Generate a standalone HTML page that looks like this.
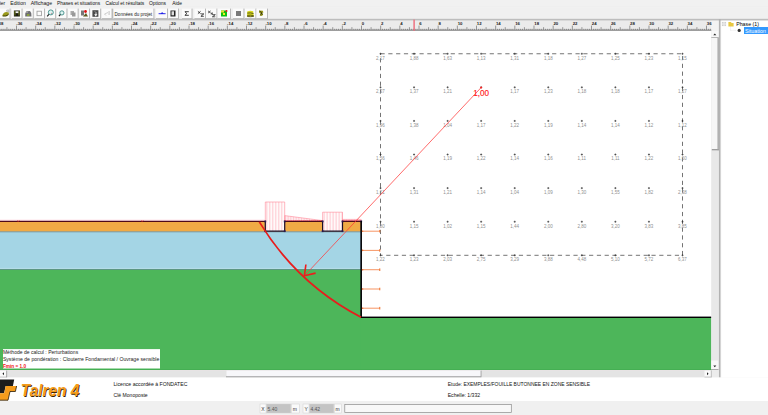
<!DOCTYPE html>
<html><head><meta charset="utf-8"><title>Talren 4</title>
<style>html,body{margin:0;padding:0;width:768px;height:415px;overflow:hidden;background:#f0f0f0;font-family:"Liberation Sans",sans-serif}svg{display:block}</style>
</head><body><svg width="768" height="415" viewBox="0 0 768 415" font-family="Liberation Sans, sans-serif"><rect x="0" y="0" width="768" height="7.5" fill="#f1f1f1"/>
<text x="-0.3" y="5.2" font-size="5.3" fill="#111" textLength="5.40" lengthAdjust="spacingAndGlyphs" >ier</text>
<text x="10.3" y="5.2" font-size="5.3" fill="#111" textLength="15.50" lengthAdjust="spacingAndGlyphs" >Edition</text>
<text x="30.7" y="5.2" font-size="5.3" fill="#111" textLength="21.40" lengthAdjust="spacingAndGlyphs" >Affichage</text>
<text x="57.1" y="5.2" font-size="5.3" fill="#111" textLength="43.10" lengthAdjust="spacingAndGlyphs" >Phases et situations</text>
<text x="105.4" y="5.2" font-size="5.3" fill="#111" textLength="38.90" lengthAdjust="spacingAndGlyphs" >Calcul et résultats</text>
<text x="149" y="5.2" font-size="5.3" fill="#111" textLength="17.10" lengthAdjust="spacingAndGlyphs" >Options</text>
<text x="172.2" y="5.2" font-size="5.3" fill="#111" textLength="9.90" lengthAdjust="spacingAndGlyphs" >Aide</text>
<rect x="0" y="7.5" width="768" height="12" fill="#f0f0f0"/>
<rect x="0" y="6.9" width="768" height="0.6" fill="#dcdcdc"/><rect x="0" y="7.5" width="768" height="0.6" fill="#fcfcfc"/>
<rect x="268" y="8.1" width="500" height="10.9" fill="#f0f0f0"/>
<rect x="-1" y="8.6" width="10.6" height="9.6" fill="#fbfbfb"/>
<rect x="9.6" y="8.6" width="0.9" height="10.2" fill="#b4b4b4"/>
<rect x="-1" y="18.2" width="11.5" height="0.8" fill="#b4b4b4"/>
<rect x="12" y="8.6" width="9.6" height="9.6" fill="#fbfbfb"/>
<rect x="21.6" y="8.6" width="0.9" height="10.2" fill="#b4b4b4"/>
<rect x="12" y="18.2" width="10.5" height="0.8" fill="#b4b4b4"/>
<rect x="23.2" y="8.6" width="9.6" height="9.6" fill="#fbfbfb"/>
<rect x="32.8" y="8.6" width="0.9" height="10.2" fill="#b4b4b4"/>
<rect x="23.2" y="18.2" width="10.5" height="0.8" fill="#b4b4b4"/>
<rect x="34.4" y="8.6" width="9.6" height="9.6" fill="#fbfbfb"/>
<rect x="44.0" y="8.6" width="0.9" height="10.2" fill="#b4b4b4"/>
<rect x="34.4" y="18.2" width="10.5" height="0.8" fill="#b4b4b4"/>
<rect x="45.6" y="8.6" width="9.6" height="9.6" fill="#fbfbfb"/>
<rect x="55.2" y="8.6" width="0.9" height="10.2" fill="#b4b4b4"/>
<rect x="45.6" y="18.2" width="10.5" height="0.8" fill="#b4b4b4"/>
<rect x="56.9" y="8.6" width="9.6" height="9.6" fill="#fbfbfb"/>
<rect x="66.5" y="8.6" width="0.9" height="10.2" fill="#b4b4b4"/>
<rect x="56.9" y="18.2" width="10.5" height="0.8" fill="#b4b4b4"/>
<rect x="68.1" y="8.6" width="9.6" height="9.6" fill="#fbfbfb"/>
<rect x="77.69999999999999" y="8.6" width="0.9" height="10.2" fill="#b4b4b4"/>
<rect x="68.1" y="18.2" width="10.5" height="0.8" fill="#b4b4b4"/>
<rect x="79.4" y="8.6" width="9.6" height="9.6" fill="#fbfbfb"/>
<rect x="89.0" y="8.6" width="0.9" height="10.2" fill="#b4b4b4"/>
<rect x="79.4" y="18.2" width="10.5" height="0.8" fill="#b4b4b4"/>
<rect x="90.6" y="8.6" width="9.6" height="9.6" fill="#fbfbfb"/>
<rect x="100.19999999999999" y="8.6" width="0.9" height="10.2" fill="#b4b4b4"/>
<rect x="90.6" y="18.2" width="10.5" height="0.8" fill="#b4b4b4"/>
<rect x="102" y="8.6" width="9.6" height="9.6" fill="#fbfbfb"/>
<rect x="111.6" y="8.6" width="0.9" height="10.2" fill="#b4b4b4"/>
<rect x="102" y="18.2" width="10.5" height="0.8" fill="#b4b4b4"/>
<rect x="113.5" y="8.6" width="40" height="9.6" fill="#fbfbfb"/>
<rect x="153.5" y="8.6" width="0.9" height="10.2" fill="#b4b4b4"/>
<rect x="113.5" y="18.2" width="40.9" height="0.8" fill="#b4b4b4"/>
<rect x="112.4" y="8.8" width="0.8" height="9.6" fill="#a8a8a8"/>
<text x="114.5" y="15.7" font-size="5.2" fill="#222" textLength="37.60" lengthAdjust="spacingAndGlyphs" >Données du projet</text>
<rect x="156" y="8.6" width="11" height="9.6" fill="#fbfbfb"/>
<rect x="167" y="8.6" width="0.9" height="10.2" fill="#b4b4b4"/>
<rect x="156" y="18.2" width="11.9" height="0.8" fill="#b4b4b4"/>
<rect x="168.5" y="8.6" width="9.6" height="9.6" fill="#fbfbfb"/>
<rect x="178.1" y="8.6" width="0.9" height="10.2" fill="#b4b4b4"/>
<rect x="168.5" y="18.2" width="10.5" height="0.8" fill="#b4b4b4"/>
<rect x="182" y="8.6" width="9.6" height="9.6" fill="#fbfbfb"/>
<rect x="191.6" y="8.6" width="0.9" height="10.2" fill="#b4b4b4"/>
<rect x="182" y="18.2" width="10.5" height="0.8" fill="#b4b4b4"/>
<rect x="194.5" y="8.6" width="10.5" height="9.6" fill="#fbfbfb"/>
<rect x="205.0" y="8.6" width="0.9" height="10.2" fill="#b4b4b4"/>
<rect x="194.5" y="18.2" width="11.4" height="0.8" fill="#b4b4b4"/>
<rect x="206" y="8.6" width="10.5" height="9.6" fill="#fbfbfb"/>
<rect x="216.5" y="8.6" width="0.9" height="10.2" fill="#b4b4b4"/>
<rect x="206" y="18.2" width="11.4" height="0.8" fill="#b4b4b4"/>
<rect x="217.6" y="8.6" width="12.5" height="9.6" fill="#fbfbfb"/>
<rect x="230.1" y="8.6" width="0.9" height="10.2" fill="#b4b4b4"/>
<rect x="217.6" y="18.2" width="13.4" height="0.8" fill="#b4b4b4"/>
<rect x="233" y="8.6" width="10.5" height="9.6" fill="#fbfbfb"/>
<rect x="243.5" y="8.6" width="0.9" height="10.2" fill="#b4b4b4"/>
<rect x="233" y="18.2" width="11.4" height="0.8" fill="#b4b4b4"/>
<rect x="245" y="8.6" width="10.5" height="9.6" fill="#fbfbfb"/>
<rect x="255.5" y="8.6" width="0.9" height="10.2" fill="#b4b4b4"/>
<rect x="245" y="18.2" width="11.4" height="0.8" fill="#b4b4b4"/>
<rect x="256.5" y="8.6" width="10.5" height="9.6" fill="#fbfbfb"/>
<rect x="267.0" y="8.6" width="0.9" height="10.2" fill="#b4b4b4"/>
<rect x="256.5" y="18.2" width="11.4" height="0.8" fill="#b4b4b4"/>
<path d="M6.6 10.2 L8.6 9.9 L9 11.8 L7 12.2Z" fill="#e8e8e8" stroke="#777" stroke-width="0.4"/><path d="M2.3 15.6 Q3.2 12.3 6.5 12 L9.2 12.8 Q8.6 15.6 6.8 16.2 L3 16.3Z" fill="#9a9a1a"/><path d="M2.6 16 Q6 16.6 8.6 14.6" stroke="#2a2a0a" stroke-width="0.8" fill="none"/>
<rect x="13.9" y="10.5" width="6" height="6" fill="#1c1c10"/><rect x="14.5" y="11" width="0.9" height="4.5" fill="#7a8a20"/><rect x="18.5" y="11" width="0.9" height="4.5" fill="#7a8a20"/><rect x="15.6" y="11.3" width="2.8" height="1.8" fill="#f4f4f4"/>
<path d="M25.2 16.4 Q24.8 12.6 26.4 11.3 L30 11.1 Q31.8 12.6 31.5 16.4Z" fill="#6e6e72"/><rect x="27" y="14" width="2.4" height="2" fill="#8aa040"/><rect x="26.5" y="11.8" width="1" height="1" fill="#dcdcdc"/>
<rect x="37" y="11.2" width="4.5" height="4.5" fill="none" stroke="#9a9a9a" stroke-width="0.8"/>
<circle cx="50.8" cy="12.4" r="2.5" fill="#dff4f2" stroke="#3c8a86" stroke-width="0.9"/><circle cx="51.4" cy="13.2" r="0.5" fill="#c05a6a"/><path d="M48.9 14.3 L47.2 16.4" stroke="#1a1a1a" stroke-width="1.1"/>
<circle cx="61.9" cy="12.9" r="2.1" fill="#dff4f2" stroke="#3c8a86" stroke-width="0.9"/><path d="M60.4 14.5 L58.9 16.1" stroke="#1a1a1a" stroke-width="1.1"/>
<rect x="70.5" y="11" width="3.5" height="4" fill="#aaa"/><rect x="72" y="12.5" width="3.5" height="4" fill="#999"/>
<rect x="81" y="10.5" width="3" height="5" fill="#777"/><circle cx="85.5" cy="11.5" r="1.4" fill="#e01010"/><path d="M83 16.5 L86 13 L88 16.5Z" fill="#5a5a20"/>
<path d="M92.4 10.2H98.4V16.8H92.4Z" fill="#4a4a4a"/><path d="M93.4 10.8L96 11.2L95.3 12.5Z" fill="#777"/><path d="M95.6 12.3V14.2H94.2L95.8 16.6L97.4 14.2H96.4V12.3Z" fill="#fff"/>
<path d="M104.5 14 L108 12.5 M104.5 14 L106 15.5" stroke="#bbb" stroke-width="0.7" fill="none"/><rect x="108.5" y="11" width="1.2" height="4" fill="#ccc"/>
<path d="M158.6 13.7 H165.6" stroke="#1414e6" stroke-width="0.9"/><path d="M160.6 13.7 Q162.1 10.6 163.6 13.7Z" fill="#1414e6"/>
<rect x="170.5" y="10.5" width="5" height="6" fill="#222"/><rect x="171.5" y="11.3" width="2.5" height="4" fill="#ddd"/>
<path d="M188.8 11.7 H184.9 L186.9 13.5 L184.9 15.3 H188.8" stroke="#111" stroke-width="0.8" fill="none"/>
<path d="M197.9 11.3 L200.6 13.7 M200.6 11.3 L197.9 13.7 M200.9 13.9 H203.8 L200.9 16.3 H203.8" stroke="#111" stroke-width="0.75" fill="none"/>
<path d="M208.1 10.9 L210.6 13.1 M210.6 10.9 L208.1 13.1 M210.8 12.6 L213 14.6 M213 12.6 L210.8 14.6 M212.4 14.7 H215.3 L212.4 16.8 H215.3" stroke="#111" stroke-width="0.7" fill="none"/>
<rect x="221" y="10.5" width="6" height="6" fill="#10c010"/><rect x="221" y="10.5" width="3" height="2" fill="#e8e030"/><circle cx="226.5" cy="11" r="1" fill="#e02020"/><rect x="223" y="13" width="2" height="2" fill="#f0f020"/>
<rect x="236" y="11" width="5" height="5" fill="#7a7a7a"/>
<path d="M247.2 11.6 Q250 10 253.2 11.2 L253.8 16.4 Q250.5 17.2 247 16.5Z" fill="#d8d820"/><path d="M247.3 13.1 Q250.5 12.5 253.5 13.5 M247.2 15.4 Q250.5 14.8 253.7 15.6 M247.2 16.5 Q250.5 17 253.8 16.4" stroke="#2a2a08" stroke-width="0.7" fill="none"/>
<path d="M259.2 10.5 L262.8 10.8 L263.4 12.4 L261.8 13 L263.2 14.2 L262 15.9 L259.8 15.6 L260.6 13.8 L259 12.6Z" fill="#9a9a14"/><path d="M259.4 11 L261.8 12.6 L260.4 15.4 M261.5 13.5 L263 14.3" stroke="#1e1e08" stroke-width="0.7" fill="none"/>
<rect x="0" y="18.8" width="768" height="1.9" fill="#bdbdbd"/>
<rect x="0" y="20.6" width="711.3" height="10.4" fill="#ebebeb"/>
<rect x="711.3" y="20.6" width="8" height="10.4" fill="#f3f3f3"/>
<path d="M1.18 28.8V30M3.10 28.8V30M5.01 28.8V30M6.93 27.2V30M8.85 28.8V30M10.76 28.8V30M12.68 28.8V30M14.60 28.8V30M16.51 25.6V30M18.43 28.8V30M20.35 28.8V30M22.26 28.8V30M24.18 28.8V30M26.09 27.2V30M28.01 28.8V30M29.93 28.8V30M31.84 28.8V30M33.76 28.8V30M35.68 25.6V30M37.59 28.8V30M39.51 28.8V30M41.43 28.8V30M43.34 28.8V30M45.26 27.2V30M47.18 28.8V30M49.09 28.8V30M51.01 28.8V30M52.93 28.8V30M54.84 25.6V30M56.76 28.8V30M58.68 28.8V30M60.59 28.8V30M62.51 28.8V30M64.43 27.2V30M66.34 28.8V30M68.26 28.8V30M70.18 28.8V30M72.09 28.8V30M74.01 25.6V30M75.93 28.8V30M77.84 28.8V30M79.76 28.8V30M81.68 28.8V30M83.59 27.2V30M85.51 28.8V30M87.43 28.8V30M89.34 28.8V30M91.26 28.8V30M93.18 25.6V30M95.09 28.8V30M97.01 28.8V30M98.93 28.8V30M100.84 28.8V30M102.76 27.2V30M104.68 28.8V30M106.59 28.8V30M108.51 28.8V30M110.43 28.8V30M112.34 25.6V30M114.26 28.8V30M116.18 28.8V30M118.09 28.8V30M120.01 28.8V30M121.92 27.2V30M123.84 28.8V30M125.76 28.8V30M127.67 28.8V30M129.59 28.8V30M131.51 25.6V30M133.42 28.8V30M135.34 28.8V30M137.26 28.8V30M139.17 28.8V30M141.09 27.2V30M143.01 28.8V30M144.92 28.8V30M146.84 28.8V30M148.76 28.8V30M150.67 25.6V30M152.59 28.8V30M154.51 28.8V30M156.42 28.8V30M158.34 28.8V30M160.26 27.2V30M162.17 28.8V30M164.09 28.8V30M166.01 28.8V30M167.92 28.8V30M169.84 25.6V30M171.76 28.8V30M173.67 28.8V30M175.59 28.8V30M177.51 28.8V30M179.42 27.2V30M181.34 28.8V30M183.26 28.8V30M185.17 28.8V30M187.09 28.8V30M189.01 25.6V30M190.92 28.8V30M192.84 28.8V30M194.76 28.8V30M196.67 28.8V30M198.59 27.2V30M200.51 28.8V30M202.42 28.8V30M204.34 28.8V30M206.26 28.8V30M208.17 25.6V30M210.09 28.8V30M212.01 28.8V30M213.92 28.8V30M215.84 28.8V30M217.75 27.2V30M219.67 28.8V30M221.59 28.8V30M223.50 28.8V30M225.42 28.8V30M227.34 25.6V30M229.25 28.8V30M231.17 28.8V30M233.09 28.8V30M235.00 28.8V30M236.92 27.2V30M238.84 28.8V30M240.75 28.8V30M242.67 28.8V30M244.59 28.8V30M246.50 25.6V30M248.42 28.8V30M250.34 28.8V30M252.25 28.8V30M254.17 28.8V30M256.09 27.2V30M258.00 28.8V30M259.92 28.8V30M261.84 28.8V30M263.75 28.8V30M265.67 25.6V30M267.59 28.8V30M269.50 28.8V30M271.42 28.8V30M273.34 28.8V30M275.25 27.2V30M277.17 28.8V30M279.09 28.8V30M281.00 28.8V30M282.92 28.8V30M284.84 25.6V30M286.75 28.8V30M288.67 28.8V30M290.59 28.8V30M292.50 28.8V30M294.42 27.2V30M296.34 28.8V30M298.25 28.8V30M300.17 28.8V30M302.09 28.8V30M304.00 25.6V30M305.92 28.8V30M307.84 28.8V30M309.75 28.8V30M311.67 28.8V30M313.58 27.2V30M315.50 28.8V30M317.42 28.8V30M319.33 28.8V30M321.25 28.8V30M323.17 25.6V30M325.08 28.8V30M327.00 28.8V30M328.92 28.8V30M330.83 28.8V30M332.75 27.2V30M334.67 28.8V30M336.58 28.8V30M338.50 28.8V30M340.42 28.8V30M342.33 25.6V30M344.25 28.8V30M346.17 28.8V30M348.08 28.8V30M350.00 28.8V30M351.92 27.2V30M353.83 28.8V30M355.75 28.8V30M357.67 28.8V30M359.58 28.8V30M361.50 25.6V30M363.42 28.8V30M365.33 28.8V30M367.25 28.8V30M369.17 28.8V30M371.08 27.2V30M373.00 28.8V30M374.92 28.8V30M376.83 28.8V30M378.75 28.8V30M380.67 25.6V30M382.58 28.8V30M384.50 28.8V30M386.42 28.8V30M388.33 28.8V30M390.25 27.2V30M392.17 28.8V30M394.08 28.8V30M396.00 28.8V30M397.92 28.8V30M399.83 25.6V30M401.75 28.8V30M403.67 28.8V30M405.58 28.8V30M407.50 28.8V30M409.42 27.2V30M411.33 28.8V30M413.25 28.8V30M415.16 28.8V30M417.08 28.8V30M419.00 25.6V30M420.91 28.8V30M422.83 28.8V30M424.75 28.8V30M426.66 28.8V30M428.58 27.2V30M430.50 28.8V30M432.41 28.8V30M434.33 28.8V30M436.25 28.8V30M438.16 25.6V30M440.08 28.8V30M442.00 28.8V30M443.91 28.8V30M445.83 28.8V30M447.75 27.2V30M449.66 28.8V30M451.58 28.8V30M453.50 28.8V30M455.41 28.8V30M457.33 25.6V30M459.25 28.8V30M461.16 28.8V30M463.08 28.8V30M465.00 28.8V30M466.91 27.2V30M468.83 28.8V30M470.75 28.8V30M472.66 28.8V30M474.58 28.8V30M476.50 25.6V30M478.41 28.8V30M480.33 28.8V30M482.25 28.8V30M484.16 28.8V30M486.08 27.2V30M488.00 28.8V30M489.91 28.8V30M491.83 28.8V30M493.75 28.8V30M495.66 25.6V30M497.58 28.8V30M499.50 28.8V30M501.41 28.8V30M503.33 28.8V30M505.25 27.2V30M507.16 28.8V30M509.08 28.8V30M510.99 28.8V30M512.91 28.8V30M514.83 25.6V30M516.74 28.8V30M518.66 28.8V30M520.58 28.8V30M522.49 28.8V30M524.41 27.2V30M526.33 28.8V30M528.24 28.8V30M530.16 28.8V30M532.08 28.8V30M533.99 25.6V30M535.91 28.8V30M537.83 28.8V30M539.74 28.8V30M541.66 28.8V30M543.58 27.2V30M545.49 28.8V30M547.41 28.8V30M549.33 28.8V30M551.24 28.8V30M553.16 25.6V30M555.08 28.8V30M556.99 28.8V30M558.91 28.8V30M560.83 28.8V30M562.74 27.2V30M564.66 28.8V30M566.58 28.8V30M568.49 28.8V30M570.41 28.8V30M572.33 25.6V30M574.24 28.8V30M576.16 28.8V30M578.08 28.8V30M579.99 28.8V30M581.91 27.2V30M583.83 28.8V30M585.74 28.8V30M587.66 28.8V30M589.58 28.8V30M591.49 25.6V30M593.41 28.8V30M595.33 28.8V30M597.24 28.8V30M599.16 28.8V30M601.08 27.2V30M602.99 28.8V30M604.91 28.8V30M606.82 28.8V30M608.74 28.8V30M610.66 25.6V30M612.57 28.8V30M614.49 28.8V30M616.41 28.8V30M618.32 28.8V30M620.24 27.2V30M622.16 28.8V30M624.07 28.8V30M625.99 28.8V30M627.91 28.8V30M629.82 25.6V30M631.74 28.8V30M633.66 28.8V30M635.57 28.8V30M637.49 28.8V30M639.41 27.2V30M641.32 28.8V30M643.24 28.8V30M645.16 28.8V30M647.07 28.8V30M648.99 25.6V30M650.91 28.8V30M652.82 28.8V30M654.74 28.8V30M656.66 28.8V30M658.57 27.2V30M660.49 28.8V30M662.41 28.8V30M664.32 28.8V30M666.24 28.8V30M668.16 25.6V30M670.07 28.8V30M671.99 28.8V30M673.91 28.8V30M675.82 28.8V30M677.74 27.2V30M679.66 28.8V30M681.57 28.8V30M683.49 28.8V30M685.41 28.8V30M687.32 25.6V30M689.24 28.8V30M691.16 28.8V30M693.07 28.8V30M694.99 28.8V30M696.90 27.2V30M698.82 28.8V30M700.74 28.8V30M702.65 28.8V30M704.57 28.8V30M706.49 25.6V30M708.40 28.8V30M710.32 28.8V30" stroke="#5a5a5a" stroke-width="0.6"/>
<rect x="0" y="29.7" width="711.3" height="0.9" fill="#6a6a6a"/>
<text x="-2.90" y="24.9" font-size="4.3" fill="#222" font-weight="bold">-38</text>
<text x="16.26" y="24.9" font-size="4.3" fill="#222" font-weight="bold">-36</text>
<text x="35.43" y="24.9" font-size="4.3" fill="#222" font-weight="bold">-34</text>
<text x="54.59" y="24.9" font-size="4.3" fill="#222" font-weight="bold">-32</text>
<text x="73.76" y="24.9" font-size="4.3" fill="#222" font-weight="bold">-30</text>
<text x="92.93" y="24.9" font-size="4.3" fill="#222" font-weight="bold">-28</text>
<text x="112.09" y="24.9" font-size="4.3" fill="#222" font-weight="bold">-26</text>
<text x="131.26" y="24.9" font-size="4.3" fill="#222" font-weight="bold">-24</text>
<text x="150.42" y="24.9" font-size="4.3" fill="#222" font-weight="bold">-22</text>
<text x="169.59" y="24.9" font-size="4.3" fill="#222" font-weight="bold">-20</text>
<text x="188.76" y="24.9" font-size="4.3" fill="#222" font-weight="bold">-18</text>
<text x="207.92" y="24.9" font-size="4.3" fill="#222" font-weight="bold">-16</text>
<text x="227.09" y="24.9" font-size="4.3" fill="#222" font-weight="bold">-14</text>
<text x="246.25" y="24.9" font-size="4.3" fill="#222" font-weight="bold">-12</text>
<text x="265.42" y="24.9" font-size="4.3" fill="#222" font-weight="bold">-10</text>
<text x="284.59" y="24.9" font-size="4.3" fill="#222" font-weight="bold">-8</text>
<text x="303.75" y="24.9" font-size="4.3" fill="#222" font-weight="bold">-6</text>
<text x="322.92" y="24.9" font-size="4.3" fill="#222" font-weight="bold">-4</text>
<text x="342.08" y="24.9" font-size="4.3" fill="#222" font-weight="bold">-2</text>
<text x="361.80" y="24.9" font-size="4.3" fill="#222" font-weight="bold">0</text>
<text x="380.97" y="24.9" font-size="4.3" fill="#222" font-weight="bold">2</text>
<text x="400.13" y="24.9" font-size="4.3" fill="#222" font-weight="bold">4</text>
<text x="419.30" y="24.9" font-size="4.3" fill="#222" font-weight="bold">6</text>
<text x="438.46" y="24.9" font-size="4.3" fill="#222" font-weight="bold">8</text>
<text x="457.63" y="24.9" font-size="4.3" fill="#222" font-weight="bold">10</text>
<text x="476.80" y="24.9" font-size="4.3" fill="#222" font-weight="bold">12</text>
<text x="495.96" y="24.9" font-size="4.3" fill="#222" font-weight="bold">14</text>
<text x="515.13" y="24.9" font-size="4.3" fill="#222" font-weight="bold">16</text>
<text x="534.29" y="24.9" font-size="4.3" fill="#222" font-weight="bold">18</text>
<text x="553.46" y="24.9" font-size="4.3" fill="#222" font-weight="bold">20</text>
<text x="572.63" y="24.9" font-size="4.3" fill="#222" font-weight="bold">22</text>
<text x="591.79" y="24.9" font-size="4.3" fill="#222" font-weight="bold">24</text>
<text x="610.96" y="24.9" font-size="4.3" fill="#222" font-weight="bold">26</text>
<text x="630.12" y="24.9" font-size="4.3" fill="#222" font-weight="bold">28</text>
<text x="649.29" y="24.9" font-size="4.3" fill="#222" font-weight="bold">30</text>
<text x="668.46" y="24.9" font-size="4.3" fill="#222" font-weight="bold">32</text>
<text x="687.62" y="24.9" font-size="4.3" fill="#222" font-weight="bold">34</text>
<text x="706.79" y="24.9" font-size="4.3" fill="#222" font-weight="bold">36</text>
<rect x="413.4" y="19.6" width="1.4" height="11.2" fill="#ee6a7a"/>
<rect x="0" y="31" width="711.3" height="339.3" fill="#ffffff"/>
<rect x="0" y="221.3" width="361.2" height="10.5" fill="#f0aa45"/>
<rect x="0" y="231.8" width="361.2" height="37.5" fill="#a4d5e5"/>
<rect x="0" y="269.3" width="361.2" height="101" fill="#4db65a"/>
<rect x="360.5" y="317.4" width="350.8" height="52.9" fill="#4db65a"/>
<rect x="265.3" y="221" width="19.4" height="10.3" fill="#ffffff"/>
<rect x="322.6" y="221" width="19.9" height="10.3" fill="#ffffff"/>
<path d="M0 231.8H361.2" stroke="#6a8890" stroke-width="0.8"/>
<path d="M0 268.4H361.2" stroke="#c4eaf6" stroke-width="0.9"/>
<path d="M0 269.4H361.2" stroke="#4a7a80" stroke-width="0.7"/>
<path d="M265.3 231V202L284.7 202V231Z" fill="#fffafa"/>
<path d="M266.80 202.00V231.00M269.80 202.00V231.00M272.80 202.00V231.00M275.80 202.00V231.00M278.80 202.00V231.00M281.80 202.00V231.00" stroke="#ffa0ac" stroke-width="0.55"/>
<path d="M265.3 231V202L284.7 202V231" stroke="#ff8898" stroke-width="0.6" fill="none"/>
<path d="M285.50 215.71V221.00M287.10 215.92V221.00M288.70 216.13V221.00M290.30 216.34V221.00M291.90 216.55V221.00M293.50 216.76V221.00M295.10 216.97V221.00M296.70 217.18V221.00M298.30 217.39V221.00M299.90 217.61V221.00M301.50 217.82V221.00M303.10 218.03V221.00M304.70 218.24V221.00M306.30 218.45V221.00M307.90 218.66V221.00M309.50 218.87V221.00M311.10 219.08V221.00M312.70 219.29V221.00M314.30 219.51V221.00M315.90 219.72V221.00M317.50 219.93V221.00M319.10 220.14V221.00M320.70 220.35V221.00" stroke="#ffa0ac" stroke-width="0.55"/>
<path d="M284.7 221V215.6L322.6 220.6V221" stroke="#ff8898" stroke-width="0.6" fill="none"/>
<path d="M322.6 231V212.2L342.5 212.2V231Z" fill="#fffafa"/>
<path d="M324.10 212.20V231.00M327.10 212.20V231.00M330.10 212.20V231.00M333.10 212.20V231.00M336.10 212.20V231.00M339.10 212.20V231.00M342.10 212.20V231.00" stroke="#ffa0ac" stroke-width="0.55"/>
<path d="M322.6 231V212.2L342.5 212.2V231" stroke="#ff8898" stroke-width="0.6" fill="none"/>
<path d="M343.30 219.40V221.20M344.90 219.40V221.20M346.50 219.40V221.20M348.10 219.40V221.20M349.70 219.40V221.20M351.30 219.40V221.20M352.90 219.40V221.20M354.50 219.40V221.20M356.10 219.40V221.20M357.70 219.40V221.20M359.30 219.40V221.20" stroke="#ffa0ac" stroke-width="0.55"/>
<path d="M342.5 221.2V219.4L361.2 219.4V221.2" stroke="#ff8898" stroke-width="0.6" fill="none"/>
<path d="M0 221.4H265.3V231.2H284.7V221.4H322.6V231.2H342.5V221.4H361.2V317.4H711.3" stroke="#1c1028" stroke-width="1.2" fill="none"/>
<path d="M0 221.3H264.6 M285.4 221.3H322 M343.2 221.3H360.6" stroke="#6a0a14" stroke-width="0.8" fill="none"/>
<path d="M0 220.2H265" stroke="#ffc4d0" stroke-width="0.7"/>
<path d="M284.7 220.5H322.6 M342.5 220.5H361" stroke="#ff3a50" stroke-width="0.9" stroke-dasharray="0.9 1.1" fill="none"/>
<rect x="264.40000000000003" y="220.5" width="1.8" height="1.8" fill="#2a1a50"/>
<rect x="264.40000000000003" y="230.29999999999998" width="1.8" height="1.8" fill="#2a1a50"/>
<rect x="283.8" y="230.29999999999998" width="1.8" height="1.8" fill="#2a1a50"/>
<rect x="283.8" y="220.5" width="1.8" height="1.8" fill="#2a1a50"/>
<rect x="321.70000000000005" y="220.5" width="1.8" height="1.8" fill="#2a1a50"/>
<rect x="321.70000000000005" y="230.29999999999998" width="1.8" height="1.8" fill="#2a1a50"/>
<rect x="341.6" y="230.29999999999998" width="1.8" height="1.8" fill="#2a1a50"/>
<rect x="341.6" y="220.5" width="1.8" height="1.8" fill="#2a1a50"/>
<rect x="360.3" y="220.5" width="1.8" height="1.8" fill="#2a1a50"/>
<path d="M17 220.5L18.2 221.5L19.5 220.5 M141 220.5L142.2 221.5L143.5 220.5" stroke="#e02020" stroke-width="0.6" fill="none"/>
<rect x="380.5" y="53.75" width="302.0" height="201.55" fill="none" stroke="#505050" stroke-width="0.8" stroke-dasharray="4.2 3.6"/>
<path d="M379.50 53.75H381.50M380.50 52.75V54.75" stroke="#333" stroke-width="0.7"/>
<text x="380.50" y="59.55" font-size="4.5" fill="#909090" text-anchor="middle">2,17</text>
<path d="M413.06 53.75H415.06M414.06 52.75V54.75" stroke="#333" stroke-width="0.7"/>
<text x="414.06" y="59.55" font-size="4.5" fill="#909090" text-anchor="middle">1,88</text>
<path d="M446.61 53.75H448.61M447.61 52.75V54.75" stroke="#333" stroke-width="0.7"/>
<text x="447.61" y="59.55" font-size="4.5" fill="#909090" text-anchor="middle">1,63</text>
<path d="M480.17 53.75H482.17M481.17 52.75V54.75" stroke="#333" stroke-width="0.7"/>
<text x="481.17" y="59.55" font-size="4.5" fill="#909090" text-anchor="middle">1,13</text>
<path d="M513.72 53.75H515.72M514.72 52.75V54.75" stroke="#333" stroke-width="0.7"/>
<text x="514.72" y="59.55" font-size="4.5" fill="#909090" text-anchor="middle">1,31</text>
<path d="M547.28 53.75H549.28M548.28 52.75V54.75" stroke="#333" stroke-width="0.7"/>
<text x="548.28" y="59.55" font-size="4.5" fill="#909090" text-anchor="middle">1,18</text>
<path d="M580.83 53.75H582.83M581.83 52.75V54.75" stroke="#333" stroke-width="0.7"/>
<text x="581.83" y="59.55" font-size="4.5" fill="#909090" text-anchor="middle">1,27</text>
<path d="M614.39 53.75H616.39M615.39 52.75V54.75" stroke="#333" stroke-width="0.7"/>
<text x="615.39" y="59.55" font-size="4.5" fill="#909090" text-anchor="middle">1,25</text>
<path d="M647.94 53.75H649.94M648.94 52.75V54.75" stroke="#333" stroke-width="0.7"/>
<text x="648.94" y="59.55" font-size="4.5" fill="#909090" text-anchor="middle">1,23</text>
<path d="M681.50 53.75H683.50M682.50 52.75V54.75" stroke="#333" stroke-width="0.7"/>
<text x="682.50" y="59.55" font-size="4.5" fill="#909090" text-anchor="middle">1,15</text>
<path d="M379.50 87.34H381.50M380.50 86.34V88.34" stroke="#333" stroke-width="0.7"/>
<text x="380.50" y="93.14" font-size="4.5" fill="#909090" text-anchor="middle">2,37</text>
<path d="M413.06 87.34H415.06M414.06 86.34V88.34" stroke="#333" stroke-width="0.7"/>
<text x="414.06" y="93.14" font-size="4.5" fill="#909090" text-anchor="middle">1,37</text>
<path d="M446.61 87.34H448.61M447.61 86.34V88.34" stroke="#333" stroke-width="0.7"/>
<text x="447.61" y="93.14" font-size="4.5" fill="#909090" text-anchor="middle">1,21</text>
<path d="M480.17 87.34H482.17M481.17 86.34V88.34" stroke="#333" stroke-width="0.7"/>
<path d="M513.72 87.34H515.72M514.72 86.34V88.34" stroke="#333" stroke-width="0.7"/>
<text x="514.72" y="93.14" font-size="4.5" fill="#909090" text-anchor="middle">1,17</text>
<path d="M547.28 87.34H549.28M548.28 86.34V88.34" stroke="#333" stroke-width="0.7"/>
<text x="548.28" y="93.14" font-size="4.5" fill="#909090" text-anchor="middle">1,23</text>
<path d="M580.83 87.34H582.83M581.83 86.34V88.34" stroke="#333" stroke-width="0.7"/>
<text x="581.83" y="93.14" font-size="4.5" fill="#909090" text-anchor="middle">1,18</text>
<path d="M614.39 87.34H616.39M615.39 86.34V88.34" stroke="#333" stroke-width="0.7"/>
<text x="615.39" y="93.14" font-size="4.5" fill="#909090" text-anchor="middle">1,18</text>
<path d="M647.94 87.34H649.94M648.94 86.34V88.34" stroke="#333" stroke-width="0.7"/>
<text x="648.94" y="93.14" font-size="4.5" fill="#909090" text-anchor="middle">1,17</text>
<path d="M681.50 87.34H683.50M682.50 86.34V88.34" stroke="#333" stroke-width="0.7"/>
<text x="682.50" y="93.14" font-size="4.5" fill="#909090" text-anchor="middle">1,27</text>
<path d="M379.50 120.93H381.50M380.50 119.93V121.93" stroke="#333" stroke-width="0.7"/>
<text x="380.50" y="126.73" font-size="4.5" fill="#909090" text-anchor="middle">1,96</text>
<path d="M413.06 120.93H415.06M414.06 119.93V121.93" stroke="#333" stroke-width="0.7"/>
<text x="414.06" y="126.73" font-size="4.5" fill="#909090" text-anchor="middle">1,38</text>
<path d="M446.61 120.93H448.61M447.61 119.93V121.93" stroke="#333" stroke-width="0.7"/>
<text x="447.61" y="126.73" font-size="4.5" fill="#909090" text-anchor="middle">1,04</text>
<path d="M480.17 120.93H482.17M481.17 119.93V121.93" stroke="#333" stroke-width="0.7"/>
<text x="481.17" y="126.73" font-size="4.5" fill="#909090" text-anchor="middle">1,17</text>
<path d="M513.72 120.93H515.72M514.72 119.93V121.93" stroke="#333" stroke-width="0.7"/>
<text x="514.72" y="126.73" font-size="4.5" fill="#909090" text-anchor="middle">1,22</text>
<path d="M547.28 120.93H549.28M548.28 119.93V121.93" stroke="#333" stroke-width="0.7"/>
<text x="548.28" y="126.73" font-size="4.5" fill="#909090" text-anchor="middle">1,19</text>
<path d="M580.83 120.93H582.83M581.83 119.93V121.93" stroke="#333" stroke-width="0.7"/>
<text x="581.83" y="126.73" font-size="4.5" fill="#909090" text-anchor="middle">1,14</text>
<path d="M614.39 120.93H616.39M615.39 119.93V121.93" stroke="#333" stroke-width="0.7"/>
<text x="615.39" y="126.73" font-size="4.5" fill="#909090" text-anchor="middle">1,14</text>
<path d="M647.94 120.93H649.94M648.94 119.93V121.93" stroke="#333" stroke-width="0.7"/>
<text x="648.94" y="126.73" font-size="4.5" fill="#909090" text-anchor="middle">1,12</text>
<path d="M681.50 120.93H683.50M682.50 119.93V121.93" stroke="#333" stroke-width="0.7"/>
<text x="682.50" y="126.73" font-size="4.5" fill="#909090" text-anchor="middle">1,12</text>
<path d="M379.50 154.53H381.50M380.50 153.53V155.53" stroke="#333" stroke-width="0.7"/>
<text x="380.50" y="160.33" font-size="4.5" fill="#909090" text-anchor="middle">1,56</text>
<path d="M413.06 154.53H415.06M414.06 153.53V155.53" stroke="#333" stroke-width="0.7"/>
<text x="414.06" y="160.33" font-size="4.5" fill="#909090" text-anchor="middle">1,46</text>
<path d="M446.61 154.53H448.61M447.61 153.53V155.53" stroke="#333" stroke-width="0.7"/>
<text x="447.61" y="160.33" font-size="4.5" fill="#909090" text-anchor="middle">1,19</text>
<path d="M480.17 154.53H482.17M481.17 153.53V155.53" stroke="#333" stroke-width="0.7"/>
<text x="481.17" y="160.33" font-size="4.5" fill="#909090" text-anchor="middle">1,22</text>
<path d="M513.72 154.53H515.72M514.72 153.53V155.53" stroke="#333" stroke-width="0.7"/>
<text x="514.72" y="160.33" font-size="4.5" fill="#909090" text-anchor="middle">1,14</text>
<path d="M547.28 154.53H549.28M548.28 153.53V155.53" stroke="#333" stroke-width="0.7"/>
<text x="548.28" y="160.33" font-size="4.5" fill="#909090" text-anchor="middle">1,16</text>
<path d="M580.83 154.53H582.83M581.83 153.53V155.53" stroke="#333" stroke-width="0.7"/>
<text x="581.83" y="160.33" font-size="4.5" fill="#909090" text-anchor="middle">1,11</text>
<path d="M614.39 154.53H616.39M615.39 153.53V155.53" stroke="#333" stroke-width="0.7"/>
<text x="615.39" y="160.33" font-size="4.5" fill="#909090" text-anchor="middle">1,11</text>
<path d="M647.94 154.53H649.94M648.94 153.53V155.53" stroke="#333" stroke-width="0.7"/>
<text x="648.94" y="160.33" font-size="4.5" fill="#909090" text-anchor="middle">1,22</text>
<path d="M681.50 154.53H683.50M682.50 153.53V155.53" stroke="#333" stroke-width="0.7"/>
<text x="682.50" y="160.33" font-size="4.5" fill="#909090" text-anchor="middle">1,60</text>
<path d="M379.50 188.12H381.50M380.50 187.12V189.12" stroke="#333" stroke-width="0.7"/>
<text x="380.50" y="193.92" font-size="4.5" fill="#909090" text-anchor="middle">1,61</text>
<path d="M413.06 188.12H415.06M414.06 187.12V189.12" stroke="#333" stroke-width="0.7"/>
<text x="414.06" y="193.92" font-size="4.5" fill="#909090" text-anchor="middle">1,31</text>
<path d="M446.61 188.12H448.61M447.61 187.12V189.12" stroke="#333" stroke-width="0.7"/>
<text x="447.61" y="193.92" font-size="4.5" fill="#909090" text-anchor="middle">1,21</text>
<path d="M480.17 188.12H482.17M481.17 187.12V189.12" stroke="#333" stroke-width="0.7"/>
<text x="481.17" y="193.92" font-size="4.5" fill="#909090" text-anchor="middle">1,14</text>
<path d="M513.72 188.12H515.72M514.72 187.12V189.12" stroke="#333" stroke-width="0.7"/>
<text x="514.72" y="193.92" font-size="4.5" fill="#909090" text-anchor="middle">1,04</text>
<path d="M547.28 188.12H549.28M548.28 187.12V189.12" stroke="#333" stroke-width="0.7"/>
<text x="548.28" y="193.92" font-size="4.5" fill="#909090" text-anchor="middle">1,09</text>
<path d="M580.83 188.12H582.83M581.83 187.12V189.12" stroke="#333" stroke-width="0.7"/>
<text x="581.83" y="193.92" font-size="4.5" fill="#909090" text-anchor="middle">1,30</text>
<path d="M614.39 188.12H616.39M615.39 187.12V189.12" stroke="#333" stroke-width="0.7"/>
<text x="615.39" y="193.92" font-size="4.5" fill="#909090" text-anchor="middle">1,55</text>
<path d="M647.94 188.12H649.94M648.94 187.12V189.12" stroke="#333" stroke-width="0.7"/>
<text x="648.94" y="193.92" font-size="4.5" fill="#909090" text-anchor="middle">1,82</text>
<path d="M681.50 188.12H683.50M682.50 187.12V189.12" stroke="#333" stroke-width="0.7"/>
<text x="682.50" y="193.92" font-size="4.5" fill="#909090" text-anchor="middle">2,38</text>
<path d="M379.50 221.71H381.50M380.50 220.71V222.71" stroke="#333" stroke-width="0.7"/>
<text x="380.50" y="227.51" font-size="4.5" fill="#909090" text-anchor="middle">1,80</text>
<path d="M413.06 221.71H415.06M414.06 220.71V222.71" stroke="#333" stroke-width="0.7"/>
<text x="414.06" y="227.51" font-size="4.5" fill="#909090" text-anchor="middle">1,15</text>
<path d="M446.61 221.71H448.61M447.61 220.71V222.71" stroke="#333" stroke-width="0.7"/>
<text x="447.61" y="227.51" font-size="4.5" fill="#909090" text-anchor="middle">1,02</text>
<path d="M480.17 221.71H482.17M481.17 220.71V222.71" stroke="#333" stroke-width="0.7"/>
<text x="481.17" y="227.51" font-size="4.5" fill="#909090" text-anchor="middle">1,15</text>
<path d="M513.72 221.71H515.72M514.72 220.71V222.71" stroke="#333" stroke-width="0.7"/>
<text x="514.72" y="227.51" font-size="4.5" fill="#909090" text-anchor="middle">1,44</text>
<path d="M547.28 221.71H549.28M548.28 220.71V222.71" stroke="#333" stroke-width="0.7"/>
<text x="548.28" y="227.51" font-size="4.5" fill="#909090" text-anchor="middle">2,00</text>
<path d="M580.83 221.71H582.83M581.83 220.71V222.71" stroke="#333" stroke-width="0.7"/>
<text x="581.83" y="227.51" font-size="4.5" fill="#909090" text-anchor="middle">2,80</text>
<path d="M614.39 221.71H616.39M615.39 220.71V222.71" stroke="#333" stroke-width="0.7"/>
<text x="615.39" y="227.51" font-size="4.5" fill="#909090" text-anchor="middle">3,20</text>
<path d="M647.94 221.71H649.94M648.94 220.71V222.71" stroke="#333" stroke-width="0.7"/>
<text x="648.94" y="227.51" font-size="4.5" fill="#909090" text-anchor="middle">3,83</text>
<path d="M681.50 221.71H683.50M682.50 220.71V222.71" stroke="#333" stroke-width="0.7"/>
<text x="682.50" y="227.51" font-size="4.5" fill="#909090" text-anchor="middle">3,85</text>
<path d="M379.50 255.30H381.50M380.50 254.30V256.30" stroke="#333" stroke-width="0.7"/>
<text x="380.50" y="261.10" font-size="4.5" fill="#909090" text-anchor="middle">1,22</text>
<path d="M413.06 255.30H415.06M414.06 254.30V256.30" stroke="#333" stroke-width="0.7"/>
<text x="414.06" y="261.10" font-size="4.5" fill="#909090" text-anchor="middle">1,23</text>
<path d="M446.61 255.30H448.61M447.61 254.30V256.30" stroke="#333" stroke-width="0.7"/>
<text x="447.61" y="261.10" font-size="4.5" fill="#909090" text-anchor="middle">2,03</text>
<path d="M480.17 255.30H482.17M481.17 254.30V256.30" stroke="#333" stroke-width="0.7"/>
<text x="481.17" y="261.10" font-size="4.5" fill="#909090" text-anchor="middle">2,75</text>
<path d="M513.72 255.30H515.72M514.72 254.30V256.30" stroke="#333" stroke-width="0.7"/>
<text x="514.72" y="261.10" font-size="4.5" fill="#909090" text-anchor="middle">3,29</text>
<path d="M547.28 255.30H549.28M548.28 254.30V256.30" stroke="#333" stroke-width="0.7"/>
<text x="548.28" y="261.10" font-size="4.5" fill="#909090" text-anchor="middle">3,88</text>
<path d="M580.83 255.30H582.83M581.83 254.30V256.30" stroke="#333" stroke-width="0.7"/>
<text x="581.83" y="261.10" font-size="4.5" fill="#909090" text-anchor="middle">4,48</text>
<path d="M614.39 255.30H616.39M615.39 254.30V256.30" stroke="#333" stroke-width="0.7"/>
<text x="615.39" y="261.10" font-size="4.5" fill="#909090" text-anchor="middle">5,10</text>
<path d="M647.94 255.30H649.94M648.94 254.30V256.30" stroke="#333" stroke-width="0.7"/>
<text x="648.94" y="261.10" font-size="4.5" fill="#909090" text-anchor="middle">5,72</text>
<path d="M681.50 255.30H683.50M682.50 254.30V256.30" stroke="#333" stroke-width="0.7"/>
<text x="682.50" y="261.10" font-size="4.5" fill="#909090" text-anchor="middle">6,37</text>
<path d="M361.5 231.2H380" stroke="#f7996a" stroke-width="1.05"/><rect x="379.2" y="229.89999999999998" width="1.1" height="2.6" fill="#ee7a3a"/><circle cx="362.6" cy="231.2" r="0.8" fill="#e0703a"/>
<path d="M361.5 250.4H380" stroke="#f7996a" stroke-width="1.05"/><rect x="379.2" y="249.1" width="1.1" height="2.6" fill="#ee7a3a"/><circle cx="362.6" cy="250.4" r="0.8" fill="#e0703a"/>
<path d="M361.5 269.7H380" stroke="#f7996a" stroke-width="1.05"/><rect x="379.2" y="268.4" width="1.1" height="2.6" fill="#ee7a3a"/><circle cx="362.6" cy="269.7" r="0.8" fill="#e0703a"/>
<path d="M361.5 289.0H380" stroke="#f7996a" stroke-width="1.05"/><rect x="379.2" y="287.7" width="1.1" height="2.6" fill="#ee7a3a"/><circle cx="362.6" cy="289.0" r="0.8" fill="#e0703a"/>
<path d="M361.5 308.2H380" stroke="#f7996a" stroke-width="1.05"/><rect x="379.2" y="306.9" width="1.1" height="2.6" fill="#ee7a3a"/><circle cx="362.6" cy="308.2" r="0.8" fill="#e0703a"/>
<path d="M361.2 221V317.9" stroke="#000" stroke-width="1.3"/>
<path d="M361.2 317.4H711.3" stroke="#000" stroke-width="1.1"/>
<path d="M259.33 221.9 A259.4 259.4 0 0 0 361.1 317.3" stroke="#e81c1c" stroke-width="1.8" fill="none"/>
<path d="M304.4 275.8 L481.2 87.5" stroke="#ff3a3a" stroke-width="0.75"/>
<path d="M305.9 264.5 L304.4 275.8 L315.6 273.1" stroke="#ee1c1c" stroke-width="1.6" fill="none"/>
<circle cx="481.2" cy="87.5" r="1" fill="#ff2020"/>
<text x="473.2" y="95.7" font-size="8.5" fill="#ff2222" textLength="15.8" lengthAdjust="spacingAndGlyphs" stroke="#ff2222" stroke-width="0.15">1,00</text>
<rect x="3" y="349.1" width="157" height="19.4" fill="#fff"/>
<text x="2.9" y="354.2" font-size="5.2" fill="#222" textLength="75.30" lengthAdjust="spacingAndGlyphs" >Méthode de calcul : Perturbations</text>
<text x="2.9" y="360.8" font-size="5.2" fill="#222" textLength="156.40" lengthAdjust="spacingAndGlyphs" >Système de pondération : Clouterre Fondamental / Ouvrage sensible</text>
<text x="2.9" y="367.7" font-size="5.5" fill="#ee1111" textLength="23.30" lengthAdjust="spacingAndGlyphs" font-weight="bold">Fmin = 1.0</text>
<rect x="711.3" y="31" width="7.4" height="339.3" fill="#e8e8e8"/>
<rect x="711.5" y="37.6" width="6.6" height="112.4" fill="#f6f6f6"/>
<rect x="711.8" y="149.1" width="7.2" height="1.2" fill="#959595"/><rect x="717.5" y="37.6" width="1.3" height="112.6" fill="#a4a4a4"/>
<rect x="711.3" y="31" width="7.4" height="6.6" fill="#f8f8f8"/><rect x="711.3" y="37.2" width="7.4" height="0.7" fill="#9a9a9a"/>
<path d="M713.3 35.3L714.8 33.6L716.3 35.3Z" fill="#222"/>
<rect x="711.3" y="360.5" width="7" height="9" fill="#f8f8f8"/><rect x="711.3" y="369.2" width="7.2" height="0.8" fill="#9a9a9a"/>
<path d="M713.3 365.5L714.8 367.2L716.3 365.5Z" fill="#222"/>
<rect x="718.9" y="19" width="1.7" height="358.5" fill="#b2b2b2"/><rect x="720.6" y="20.6" width="0.6" height="357" fill="#e4e4e4"/>
<rect x="721.2" y="20.6" width="46.8" height="357" fill="#ffffff"/>
<rect x="722.2" y="22.2" width="3.6" height="3.6" fill="#fff" stroke="#bbb" stroke-width="0.5"/><path d="M723 24H725" stroke="#999" stroke-width="0.5"/>
<path d="M728.4 22 H731 L731.5 23 H733.6 V26.4 H728.4Z" fill="#e8c840"/>
<text x="736.2" y="26.1" font-size="5.5" fill="#000" textLength="22.8" lengthAdjust="spacingAndGlyphs">Phase (1)</text>
<path d="M730.5 26.5V30.3H736" stroke="#bbb" stroke-width="0.4" stroke-dasharray="0.6 0.6" fill="none"/>
<circle cx="739.2" cy="30.4" r="1.6" fill="#333"/>
<rect x="744" y="27" width="24" height="7" fill="#3399ff"/>
<text x="745" y="32.6" font-size="5.4" fill="#fff">Situation 1</text>
<rect x="0" y="369.5" width="711.5" height="0.8" fill="#3ea84c"/>
<rect x="0" y="370.2" width="711.5" height="7.3" fill="#e4e4e4"/>
<rect x="0" y="370.3" width="711.5" height="0.6" fill="#f4e4ee"/>
<rect x="226.5" y="370.6" width="254.5" height="6.2" fill="#f7f7fa"/>
<rect x="226" y="376.4" width="255" height="1.1" fill="#8e8e8e"/><rect x="480.6" y="370.6" width="0.9" height="6.9" fill="#a0a0a0"/>
<rect x="0" y="370.6" width="6.6" height="6.4" fill="#fafafa"/><rect x="6.4" y="370.6" width="0.7" height="7" fill="#888"/><rect x="0" y="376.8" width="7" height="0.7" fill="#888"/>
<path d="M4 372.3L2.4 373.8L4 375.3Z" fill="#222"/>
<rect x="704.5" y="370.6" width="6.6" height="6.4" fill="#fafafa"/><rect x="710.9" y="370.6" width="0.7" height="7" fill="#888"/><rect x="704.5" y="376.8" width="7" height="0.7" fill="#888"/>
<path d="M707 372.3L708.6 373.8L707 375.3Z" fill="#222"/>
<rect x="711.6" y="370.2" width="7" height="7.3" fill="#ececec"/>
<rect x="0" y="377.5" width="768" height="23.5" fill="#ffffff"/>
<path d="M0 379.4 H14.2 L12.9 386 H5.7 L4.1 393.3 H0Z" fill="#1c1c1c"/>
<path d="M5.7 386 H16.6 L15.4 391.5 H10 L8 400.2 H0 V393.3 H4.1Z" fill="#f59c1c"/>
<path d="M16.6 386 L15.4 391.5 H10 L8 400.2 H0" stroke="#2a1c08" stroke-width="0.8" fill="none"/>
<text x="21.4" y="396.9" font-size="16.8" font-weight="bold" font-style="italic" fill="#3a2608" textLength="58.6" lengthAdjust="spacingAndGlyphs">Talren 4</text>
<text x="20.8" y="396.3" font-size="16.8" font-weight="bold" font-style="italic" fill="#f59c1c" textLength="58.6" lengthAdjust="spacingAndGlyphs">Talren 4</text>
<text x="113.5" y="386.2" font-size="5.2" fill="#111" textLength="73.90" lengthAdjust="spacingAndGlyphs" >Licence accordée à FONDATEC</text>
<text x="113.5" y="397.3" font-size="5.2" fill="#111" textLength="34.20" lengthAdjust="spacingAndGlyphs" >Clé Monoposte</text>
<text x="447.7" y="386.2" font-size="5.1" fill="#111" textLength="142.50" lengthAdjust="spacingAndGlyphs" >Etude: EXEMPLES/FOUILLE BUTONNEE EN ZONE SENSIBLE</text>
<text x="447.7" y="397.3" font-size="5.2" fill="#111" textLength="32.50" lengthAdjust="spacingAndGlyphs" >Echelle: 1/332</text>
<rect x="0" y="401" width="768" height="14" fill="#f0f0f0"/>
<rect x="260" y="404" width="6" height="9" fill="#fafafa" stroke="#d0d0d0" stroke-width="0.5"/>
<text x="261.2" y="410.5" font-size="5" fill="#333">X</text>
<rect x="266.5" y="404" width="24.3" height="9" fill="#c4c4c4" stroke="#d0d0d0" stroke-width="0.5"/>
<text x="267.5" y="410.5" font-size="5" fill="#555">5.40</text>
<rect x="291.5" y="404" width="7.8" height="9" fill="#fafafa" stroke="#d0d0d0" stroke-width="0.5"/>
<text x="292.8" y="410.5" font-size="5" fill="#333">m</text>
<rect x="303" y="404" width="6" height="9" fill="#fafafa" stroke="#d0d0d0" stroke-width="0.5"/>
<text x="304.4" y="410.5" font-size="5" fill="#333">Y</text>
<rect x="309.4" y="404" width="24.4" height="9" fill="#c4c4c4" stroke="#d0d0d0" stroke-width="0.5"/>
<text x="310.4" y="410.5" font-size="5" fill="#555">4.42</text>
<rect x="334.4" y="404" width="7.2" height="9" fill="#fafafa" stroke="#d0d0d0" stroke-width="0.5"/>
<text x="335.5" y="410.5" font-size="5" fill="#333">m</text>
<rect x="344.8" y="404.5" width="166.5" height="8" fill="#f8f8f8" stroke="#8a8a8a" stroke-width="0.7"/></svg></body></html>
